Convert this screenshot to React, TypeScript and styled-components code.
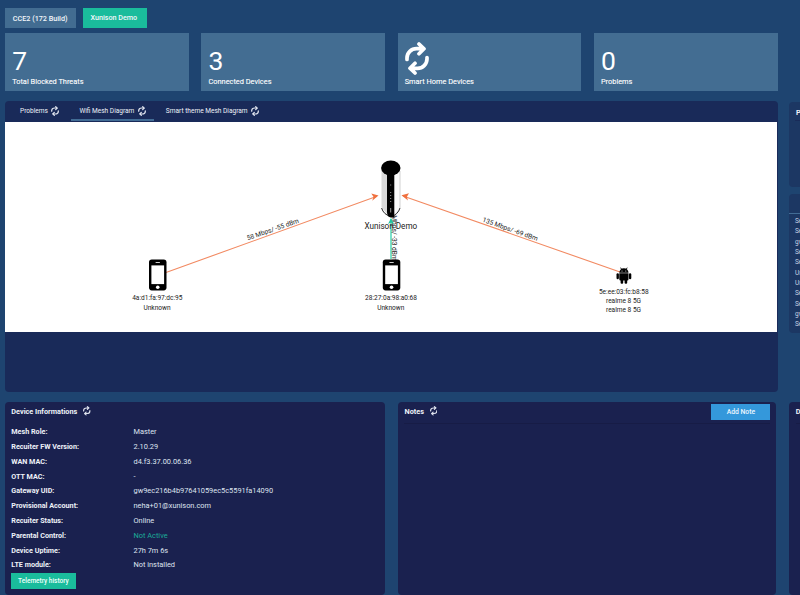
import React from 'react';
import styled, { createGlobalStyle } from 'styled-components';

const Global = createGlobalStyle`
  * { box-sizing: border-box; }
  html, body { margin: 0; padding: 0; overflow: hidden; }
  body { background: #1e4470; font-family: Roboto, sans-serif; font-size: 7.4px; color: #eef2f8; }
`;

const Page = styled.div`
  width: 100vw;
  height: 595px;
  padding: 8px 0 0 5px;
  overflow: hidden;
`;
const Builds = styled.div`
  display: flex;
  gap: 6.5px;
  height: 20px;
  margin-bottom: 5px;
`;
const BuildButton = styled.button<{ $active?: boolean }>`
  width: ${p => (p.$active ? '64px' : '71.3px')};
  height: ${p => (p.$active ? '19.5px' : '20px')};
  border: 0;
  padding: ${p => (p.$active ? '0 2px 0 0' : '1px 1px 0 0')};
  background: ${p => (p.$active ? '#1abc9c' : '#426c91')};
  color: #f2f7fb;
  font: 500 7.2px Roboto, sans-serif;
`;
const Columns = styled.div`
  display: grid;
  grid-template-columns: 772.5px 198px;
  column-gap: 11.5px;
`;
const Stats = styled.div`
  display: grid;
  grid-template-columns: repeat(4, 1fr);
  column-gap: 12.5px;
  height: 58px;
`;
const Stat = styled.div`
  display: flex;
  flex-direction: column;
  justify-content: flex-end;
  align-items: flex-start;
  padding: 0 7.2px 5px;
  background: #436d92;
  color: #fff;
`;
const StatValue = styled.div`
  height: 33px;
  font-size: 26.5px;
  line-height: 33px;
`;
const StatIcon = styled.div`
  height: 33px;
  margin-bottom: 2px;
`;
const StatLabel = styled.div`
  font-size: 7.4px;
  line-height: 9px;
  -webkit-text-stroke: 0.1px #fff;
`;
const MeshPanel = styled.section`
  height: 291px;
  margin-top: 10px;
  border-radius: 4px;
  background: #192a59;
  overflow: hidden;
`;
const Tabs = styled.nav`
  display: flex;
  gap: 4px;
  height: 21px;
  padding-left: 7px;
`;
const Tab = styled.div<{ $active?: boolean }>`
  display: flex;
  align-items: center;
  gap: 3.5px;
  height: 20px;
  padding: 1px 8px 0;
  border-bottom: 2px solid ${p => (p.$active ? '#426c95' : 'transparent')};
  font-size: 6.55px;
  white-space: nowrap;
`;
const Canvas = styled.svg`
  display: block;
  width: 772px;
  height: 210px;
  background: #fff;
  font-family: Roboto, sans-serif;
`;
const Side = styled.aside`
  padding-top: 69px;
`;
const SidePanel = styled.section<{ $h: number }>`
  height: ${p => p.$h}px;
  margin-bottom: 7px;
  border-radius: 4px;
  background: #1c3763;
  overflow: hidden;
`;
const SideTitle = styled.div`
  height: 19px;
  margin-left: 6px;
  padding: 6px 0 0 1px;
  border-bottom: 1px solid #192b59;
  font-weight: 700;
  line-height: 9px;
`;
const ListHead = styled.div`
  height: 20px;
  border-bottom: 1px solid #426c95;
`;
const ListRow = styled.div`
  height: 10.35px;
  padding-left: 6px;
  font-size: 6.5px;
  line-height: 15px;
  color: #cbd5e4;
`;
const Lower = styled.div`
  display: grid;
  grid-template-columns: 380px 378px 211px;
  column-gap: 13.2px;
  margin-top: 9.5px;
`;
const Card = styled.section`
  height: 193px;
  border-radius: 4px;
  background: #1a214f;
  padding: 0 6.3px;
  overflow: hidden;
`;
const CardHead = styled.header<{ $line?: boolean }>`
  display: flex;
  align-items: center;
  height: 22px;
  padding-bottom: 2px;
  gap: 6px;
  border-bottom: 1px solid ${p => (p.$line ? '#171c46' : 'transparent')};
  font-size: 7.3px;
  font-weight: 700;
`;
const AddNote = styled.button`
  width: 59px;
  height: 15.5px;
  margin: 2px 0 0 auto;
  border: 0;
  padding: 0 0 0 1px;
  background: #3498db;
  color: #eef7ff;
  font: 500 6.8px Roboto, sans-serif;
`;
const Info = styled.dl`
  display: grid;
  grid-template-columns: 122.2px 1fr;
  grid-auto-rows: 14.78px;
  align-items: center;
  margin: 1px 0 0;
`;
const Term = styled.dt`
  font-weight: 700;
  font-size: 7.2px;
`;
const Detail = styled.dd<{ $green?: boolean }>`
  margin: 0;
  font-size: 7.4px;
  color: ${p => (p.$green ? '#1aab98' : '#dfe4ef')};
`;
const History = styled.button`
  display: block;
  width: 64.3px;
  height: 16px;
  margin-top: 1px;
  border: 0;
  padding: 0;
  background: #1abc9c;
  color: #effffb;
  font: 500 6.5px Roboto, sans-serif;
`;
const Fields = styled.div`
  display: grid;
  gap: 7.5px;
  padding: 9px 0 0 4px;
`;
const Field = styled.div`
  height: 14.5px;
  background: #426c95;
`;

const Refresh = ({ w = 8, h = 10 }: { w?: number; h?: number }) => (
  <svg width={w} height={h} viewBox="0 0 24 33" preserveAspectRatio="none" fill="none" stroke={w > 10 ? '#fff' : '#dfe3ee'} strokeWidth={3.7} strokeLinecap="round" strokeLinejoin="round">
    <path d="M2 17.5V16A9.4 9.4 0 0 1 11.4 6.7H18.5M14 2L19 6.8L14 11.7" />
    <path d="M22 15.5V17A9.4 9.4 0 0 1 12.6 26.3H5.5M10 31L5 26.2L10 21.3" />
  </svg>
);

const Phone = ({ x, y }: { x: number; y: number }) => (
  <g transform={`translate(${x} ${y})`} fill="#000">
    <rect width="17.5" height="31" rx="2.8" />
    <rect x="2.4" y="6" width="12.7" height="18.7" fill="#fff" />
    <rect x="6.5" y="2.6" width="4.5" height="1.1" rx=".5" fill="#ccc" />
    <circle cx="8.75" cy="27.9" r="1.8" fill="#fff" />
  </g>
);

const Android = () => (
  <g transform="translate(611.5 145)" fill="#000">
    <path d="M2.8 5.8A4.6 4.6 0 0 1 12 5.8ZM2.8 6.3H12V12.3Q12 13.6 10.8 13.6H4Q2.8 13.6 2.8 12.3Z" />
    <path d="M4.3 1L5.4 2.8M10.5 1L9.4 2.8" stroke="#000" strokeWidth=".9" strokeLinecap="round" />
    <rect y="6.2" width="2.4" height="6" rx="1.2" />
    <rect x="12.4" y="6.2" width="2.4" height="6" rx="1.2" />
    <rect x="4.1" y="11.5" width="2.6" height="5.3" rx="1.1" />
    <rect x="8.1" y="11.5" width="2.6" height="5.3" rx="1.1" />
    <circle cx="5.5" cy="3.9" r=".5" fill="#fff" />
    <circle cx="9.3" cy="3.9" r=".5" fill="#fff" />
  </g>
);

const Diagram = () => (
  <Canvas viewBox="0 0 772 210" fill="#222" textAnchor="middle">
    <g fill="none" stroke="#f28a62" strokeWidth="1.1">
      <path d="M161 150.5L372 74.3M615 150L398 73.9" />
    </g>
    <path d="M373.5 73.5L366.3 71.5L368.6 75L367.2 78.8ZM396.5 73.2L404 71.3L401.8 74.9L403 78.5Z" fill="#f0713f" />
    <path d="M386 137V97" stroke="#35cfb0" strokeWidth="1.3" />
    <text transform="translate(386.8 111.5) rotate(90)" fontSize="6.6">11 Mbps/ -33 dBm</text>
    <path d="M376.5 49V85L383 93.5V49Z" fill="#d9d9d9" />
    <path d="M389 49V94L395 86V49Z" fill="#fafafa" />
    <path d="M395 49V86" stroke="#bbb" strokeWidth=".7" />
    <path d="M376.6 86Q378.5 92.5 386 94.8Q393 92.5 395 86" fill="none" stroke="#111" strokeWidth=".9" />
    <path d="M382 49H389.3V95.5H386Q382 95 382 90Z" fill="#000" />
    <ellipse cx="385.8" cy="46" rx="9.7" ry="7.5" fill="#000" />
    <path d="M385.7 62.5v1M385.7 70v1M385.7 73v1M385.7 76v1M385.7 79v1M385.7 86v4.5" stroke="#bbb" strokeWidth=".8" />
    <path d="M386 96L389 102L386 100.5L383 102Z" fill="#20c4a0" />
    <text x="385.8" y="107.3" fontSize="8.15">Xunison Demo</text>
    <Phone x={144} y={137.4} />
    <Phone x={377.8} y={137.4} />
    <Android />
    <text transform="translate(268.5 109.5) rotate(-19)" fontSize="6.6">58 Mbps/ -55 dBm</text>
    <text transform="translate(504.5 109.3) rotate(19.5)" fontSize="6.6">135 Mbps/ -69 dBm</text>
    <g fontSize="6.55">
      <text x="152.3" y="177.5">4a:d1:fa:97:dc:95</text>
      <text x="152" y="187.5">Unknown</text>
      <text x="386" y="177.5">28:27:0a:98:a0:68</text>
      <text x="385.8" y="187.5">Unknown</text>
      <text x="618.8" y="171.8">5e:ee:03:fc:b8:58</text>
      <text x="618.5" y="181">realme 8 5G</text>
      <text x="618.5" y="190">realme 8 5G</text>
    </g>
  </Canvas>
);

const details: [string, string][] = [
  ['Mesh Role:', 'Master'],
  ['Recuiter FW Version:', '2.10.29'],
  ['WAN MAC:', 'd4.f3.37.00.06.36'],
  ['OTT MAC:', '-'],
  ['Gateway UID:', 'gw9ec216b4b97641059ec5c5591fa14090'],
  ['Provisional Account:', 'neha+01@xunison.com'],
  ['Recuiter Status:', 'Online'],
  ['Parental Control:', 'Not Active'],
  ['Device Uptime:', '27h 7m 6s'],
  ['LTE module:', 'Not installed'],
];

export default function App() {
  return (
    <>
      <Global />
      <Page>
        <Builds>
          <BuildButton>CCE2 (172 Build)</BuildButton>
          <BuildButton $active>Xunison Demo</BuildButton>
        </Builds>
        <Columns>
          <main>
            <Stats>
              <Stat><StatValue>7</StatValue><StatLabel>Total Blocked Threats</StatLabel></Stat>
              <Stat><StatValue>3</StatValue><StatLabel>Connected Devices</StatLabel></Stat>
              <Stat><StatIcon><Refresh w={24} h={33} /></StatIcon><StatLabel>Smart Home Devices</StatLabel></Stat>
              <Stat><StatValue>0</StatValue><StatLabel>Problems</StatLabel></Stat>
            </Stats>
            <MeshPanel>
              <Tabs>
                <Tab>Problems<Refresh /></Tab>
                <Tab $active>Wifi Mesh Diagram<Refresh /></Tab>
                <Tab>Smart theme Mesh Diagram<Refresh /></Tab>
              </Tabs>
              <Diagram />
            </MeshPanel>
          </main>
          <Side>
            <SidePanel $h={85}><SideTitle>Problems</SideTitle></SidePanel>
            <SidePanel $h={139}>
              <ListHead />
              {['Se', 'Se', 'gw', 'Se', 'Se', 'Un', 'Un', 'Se', 'Se', 'gw', 'Se'].map((t, i) => <ListRow key={i}>{t}</ListRow>)}
            </SidePanel>
          </Side>
        </Columns>
        <Lower>
          <Card>
            <CardHead>Device Informations<Refresh w={7.5} h={9.5} /></CardHead>
            <Info>
              {details.map(([k, v]) => (
                <React.Fragment key={k}>
                  <Term>{k}</Term>
                  <Detail $green={v === 'Not Active'}>{v}</Detail>
                </React.Fragment>
              ))}
            </Info>
            <History>Telemetry history</History>
          </Card>
          <Card>
            <CardHead $line>Notes<Refresh w={7.5} h={9.5} /><AddNote>Add Note</AddNote></CardHead>
          </Card>
          <Card>
            <CardHead $line>Devices</CardHead>
            <Fields><Field /><Field /><Field /><Field /></Fields>
          </Card>
        </Lower>
      </Page>
    </>
  );
}
